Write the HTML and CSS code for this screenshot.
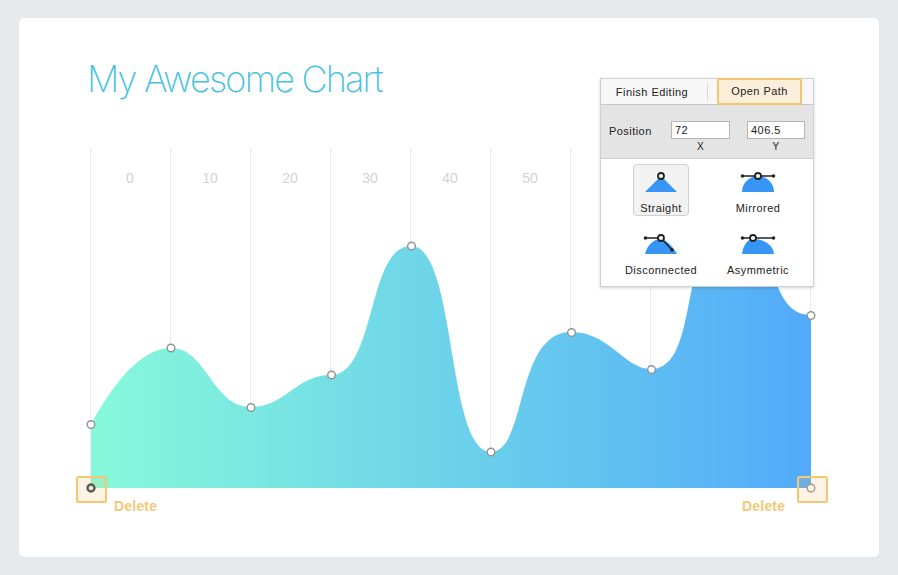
FILE: index.html
```html
<!DOCTYPE html>
<html lang="en">
<head>
<meta charset="utf-8">
<title>My Awesome Chart</title>
<link rel="stylesheet" href="styles.css">
</head>
<body>
<main class="card">
  <h1 class="title">My Awesome Chart</h1>
  <svg class="chart" viewBox="70 148 760 365" width="760" height="365">
    <defs>
      <linearGradient id="area" gradientUnits="userSpaceOnUse" x1="91" y1="0" x2="811" y2="0">
        <stop offset="0" stop-color="#80f9d8"/>
        <stop offset="1" stop-color="#49a6f9"/>
      </linearGradient>
    </defs>
    <g class="grid">
      <path d="M90.5 148V488M170.5 148V488M250.5 148V488M330.5 148V488M410.5 148V488M490.5 148V488M570.5 148V488M650.5 148V488M730.5 148V488M810.5 148V488"/>
    </g>
    <g class="axis">
      <text x="130" y="183">0</text>
      <text x="210" y="183">10</text>
      <text x="290" y="183">20</text>
      <text x="370" y="183">30</text>
      <text x="450" y="183">40</text>
      <text x="530" y="183">50</text>
    </g>
    <path class="area" fill="url(#area)" d="M91 424C112 386 140 348 171 348C207 348 212 407 251 407C285 407 296 375 331 375C376 375 367 246 411 246C457 246 446 452 491 452C527 452 515 332 571 332C610 332 624 369 651 369C702 369 676 232 731 232C781 232 765 315 811 315V488H91Z"/>
    <g class="pts">
      <circle cx="91" cy="424.500" r="3.800"/>
      <circle cx="171" cy="348" r="3.800"/>
      <circle cx="251" cy="407.500" r="3.800"/>
      <circle cx="331.500" cy="375" r="3.800"/>
      <circle cx="411.500" cy="246" r="3.800"/>
      <circle cx="491" cy="452" r="3.800"/>
      <circle cx="571.500" cy="332.500" r="3.800"/>
      <circle cx="651.500" cy="369.500" r="3.800"/>
      <circle cx="811" cy="315.500" r="3.800"/>
      <circle cx="811" cy="488" r="3.800"/>
    </g>
    <rect class="handle" x="77" y="477" width="29" height="25" rx="1.500"/>
    <rect class="handle" x="798" y="477" width="29" height="25" rx="1.500"/>
    <circle class="active" cx="91" cy="488" r="3.500"/>
    <text class="del" x="114" y="511">Delete</text>
    <text class="del" x="742" y="511">Delete</text>
  </svg>
  <aside class="panel">
    <div class="bar">
      <span class="bar-item bar-finish">Finish Editing</span>
      <span class="bar-sep"></span>
      <span class="bar-item bar-open">Open Path</span>
    </div>
    <div class="pos">
      <span class="pos-label">Position</span>
      <div class="field field-x"><div class="input">72</div><div class="cap">X</div></div>
      <div class="field field-y"><div class="input">406.5</div><div class="cap">Y</div></div>
    </div>
    <div class="opts">
      <div class="opt opt-on">
        <svg class="ico" viewBox="0 0 40 26" width="40" height="26"><path class="blue" d="M4 24L20 8L36 24Z"/><circle class="ring" cx="20" cy="8" r="3"/></svg>
        <span>Straight</span>
      </div>
      <div class="opt">
        <svg class="ico" viewBox="0 0 40 26" width="40" height="26"><path class="blue" d="M4 24A16 16 0 0 1 36 24Z"/><path class="hline" d="M4.500 8H35.500"/><circle class="dot" cx="4.500" cy="8" r="1.800"/><circle class="dot" cx="35.500" cy="8" r="1.800"/><circle class="ring" cx="20" cy="8" r="3"/></svg>
        <span>Mirrored</span>
      </div>
      <div class="opt">
        <svg class="ico" viewBox="0 0 40 26" width="40" height="26"><path class="blue" d="M4 24C6 15 13 9 20 9C27 11 33 18 36 24Z"/><path class="hline" d="M4.500 8H20L31 20"/><circle class="dot" cx="4.500" cy="8" r="1.800"/><circle class="dot" cx="31" cy="20" r="1.800"/><circle class="ring" cx="20" cy="8" r="3"/></svg>
        <span>Disconnected</span>
      </div>
      <div class="opt">
        <svg class="ico" viewBox="0 0 40 26" width="40" height="26"><path class="blue" d="M4 24C5 15 10 9 15 9C25 9 35 14 36 24Z"/><path class="hline" d="M4.500 8H35.500"/><circle class="dot" cx="4.500" cy="8" r="1.800"/><circle class="dot" cx="35.500" cy="8" r="1.800"/><circle class="ring" cx="15" cy="8" r="3"/></svg>
        <span>Asymmetric</span>
      </div>
    </div>
  </aside>
</main>
</body>
</html>
```
FILE: styles.css
```css
* { box-sizing: border-box; }
html, body { margin: 0; height: 100%; }
body {
  background: #e7eaed;
  padding: 18px 19px;
  overflow: hidden;
  font-family: "Liberation Sans", Arial, sans-serif;
}
.card {
  position: relative;
  width: 860px;
  height: 539px;
  background: #fff;
  border-radius: 5px;
  box-shadow: 0 0 2px rgba(0,0,0,.06);
  padding: 38px 0 0 51px;
}
.title {
  margin: 0 0 0 17px;
  height: 92px;
  font-family: Inter, "Liberation Sans", sans-serif;
  font-weight: 200;
  font-size: 36px;
  line-height: 46px;
  letter-spacing: -1.8px;
  color: #46c2e2;
}
.chart { display: block; }
.grid path { stroke: #e9e9e9; stroke-width: 1; fill: none; }
.axis text {
  font-family: "Liberation Sans", Arial, sans-serif;
  font-size: 14px;
  fill: #d2d2d2;
  text-anchor: middle;
}
.area { opacity: .95; }
.pts circle { fill: #fff; stroke: #8f9497; stroke-width: 1.4; }
.handle { fill: rgba(245,192,110,.18); stroke: #f4c774; stroke-width: 2; }
.active { fill: #e8e8e0; stroke: #5b5a50; stroke-width: 2.400; }
.del {
  font-family: "Liberation Sans", Arial, sans-serif;
  font-size: 14px;
  font-weight: 700;
  letter-spacing: .2px;
  fill: #f5c878;
}
.panel {
  position: absolute;
  left: 581px;
  top: 60px;
  width: 214px;
  height: 209px;
  background: #fff;
  border: 1px solid #d0d0d0;
  box-shadow: 0 1px 3px rgba(0,0,0,.18);
  font-family: "Liberation Sans", Arial, sans-serif;
  font-size: 11px;
  letter-spacing: .45px;
  color: #222;
}
.bar {
  display: flex;
  align-items: center;
  height: 26px;
  background: #f7f7f7;
  border-bottom: 1px solid #c8c8c8;
}
.bar-finish { width: 102px; text-align: center; }
.bar-sep { width: 1px; height: 18px; background: #d8d8d8; margin: 0 9px 0 4px; }
.bar-open {
  width: 85px;
  height: 27px;
  line-height: 23px;
  text-align: center;
  background: #fbeedb;
  border: 2px solid #f5c46f;
  border-radius: 3px;
}
.pos {
  display: flex;
  height: 54px;
  padding: 16px 0 0 8px;
  background: #e4e4e4;
  border-bottom: 1px solid #cfcfcf;
}
.pos-label { width: 62px; line-height: 20px; }
.field { width: 59px; text-align: center; }
.field-y { width: 58px; margin-left: 17px; }
.input {
  height: 18px;
  line-height: 16px;
  padding-left: 3px;
  text-align: left;
  background: #fff;
  border: 1px solid #b5b5b5;
}
.cap { font-size: 10px; line-height: 16px; }
.opts {
  display: grid;
  grid-template-columns: 97px 97px;
  grid-auto-rows: 61.5px;
  padding: 5px 0 0 11.5px;
}
.opt {
  justify-self: center;
  display: flex;
  flex-direction: column;
  align-items: center;
  width: 56px;
  height: 52px;
  padding-top: 3px;
  border: 1px solid transparent;
  border-radius: 4px;
  white-space: nowrap;
  line-height: 16px;
}
.opt-on { background: #f2f2f2; border-color: #cfcfcf; }
.ico { display: block; flex: none; height: 26px; margin-bottom: 6px; }
.blue { fill: #3795f5; }
.hline { stroke: #222; stroke-width: 1.500; fill: none; }
.dot { fill: #222; }
.ring { fill: #fff; stroke: #222; stroke-width: 1.800; }
```
